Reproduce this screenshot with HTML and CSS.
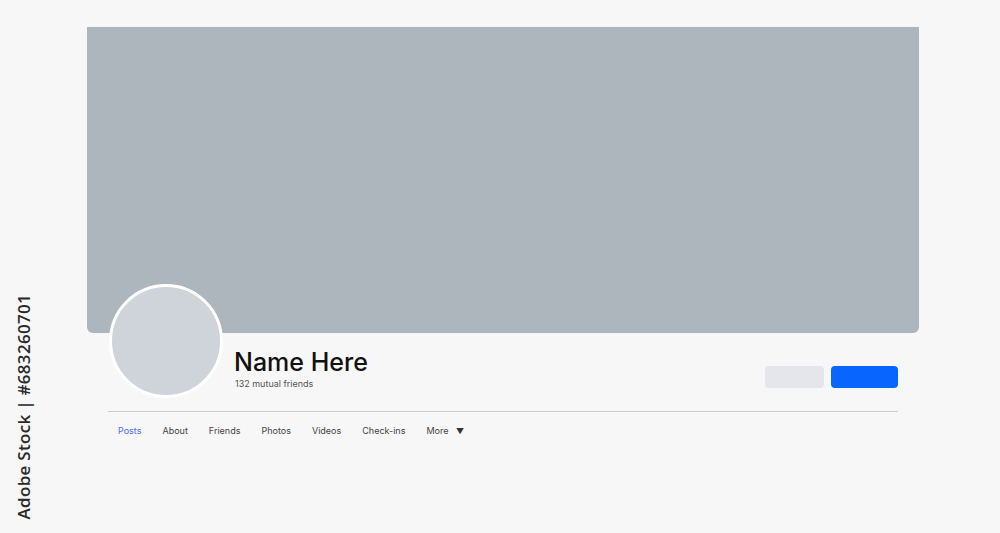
FILE: index.html
```html
<!DOCTYPE html>
<html lang="en">
<head>
    <meta charset="UTF-8">
    <title>Profile</title>
    <link rel="stylesheet" href="styles.css">
</head>
<body>
    <div class="stock-id">Adobe Stock | #683260701</div>

    <main class="page">
        <div class="cover"></div>

        <section class="profile">
            <div class="avatar"></div>
            <div class="info">
                <h1>Name Here</h1>
                <p>132 mutual friends</p>
            </div>
            <div class="actions">
                <button class="btn btn-grey"></button>
                <button class="btn btn-blue"></button>
            </div>
        </section>

        <nav class="tabs">
            <a class="active">Posts</a>
            <a>About</a>
            <a>Friends</a>
            <a>Photos</a>
            <a>Videos</a>
            <a>Check-ins</a>
            <a class="more">More <span class="caret">&#9660;</span></a>
        </nav>
    </main>
</body>
</html>
```

FILE: styles.css
```css
html, body {
    margin: 0;
    padding: 0;
    height: 100%;
    background-color: #f7f7f7;
    font-family: Inter, "Noto Sans", sans-serif;
    color: #222;
    overflow: hidden;
}

.stock-id {
    position: absolute;
    left: 12px;
    bottom: 14px;
    writing-mode: vertical-rl;
    transform: rotate(180deg);
    font-family: "Open Sans", sans-serif;
    font-size: 17px;
    font-weight: 600;
    letter-spacing: 0.3px;
    color: #2a2a2a;
}

.page {
    width: 832px;
    margin: 27px 0 0 87px;
}

.cover {
    height: 306px;
    background-color: #adb5bd;
    border-radius: 0 0 6px 6px;
}

.profile {
    display: flex;
    align-items: flex-start;
    padding: 0 21px 0 22px;
    margin-top: -49px;
}

.avatar {
    width: 108px;
    height: 108px;
    border: 3px solid #fff;
    border-radius: 50%;
    background-color: #ced4da;
    flex-shrink: 0;
}

.info {
    margin: 63px 0 0 11px;
    flex: 1;
}

.info h1 {
    margin: 0;
    font-size: 25px;
    font-weight: 500;
    line-height: 30px;
    color: #111;
}

.info p {
    margin: 1px 0 0 1px;
    font-size: 9px;
    color: #555;
}

.actions {
    display: flex;
    gap: 7px;
    margin-top: 82px;
}

.btn {
    height: 22px;
    border: none;
    border-radius: 4px;
    padding: 0;
}

.btn-grey {
    width: 59px;
    background-color: #e4e6eb;
}

.btn-blue {
    width: 67px;
    background-color: #0866ff;
}

.tabs {
    display: flex;
    gap: 21px;
    margin: 13px 21px 0 21px;
    padding: 13px 0 0 10px;
    border-top: 1px solid #ccc;
    font-size: 9px;
    color: #444;
}

.tabs a.active {
    color: #4a6cf7;
}

.caret {
    margin-left: 5px;
    font-size: 8px;
    color: #333;
}
```
